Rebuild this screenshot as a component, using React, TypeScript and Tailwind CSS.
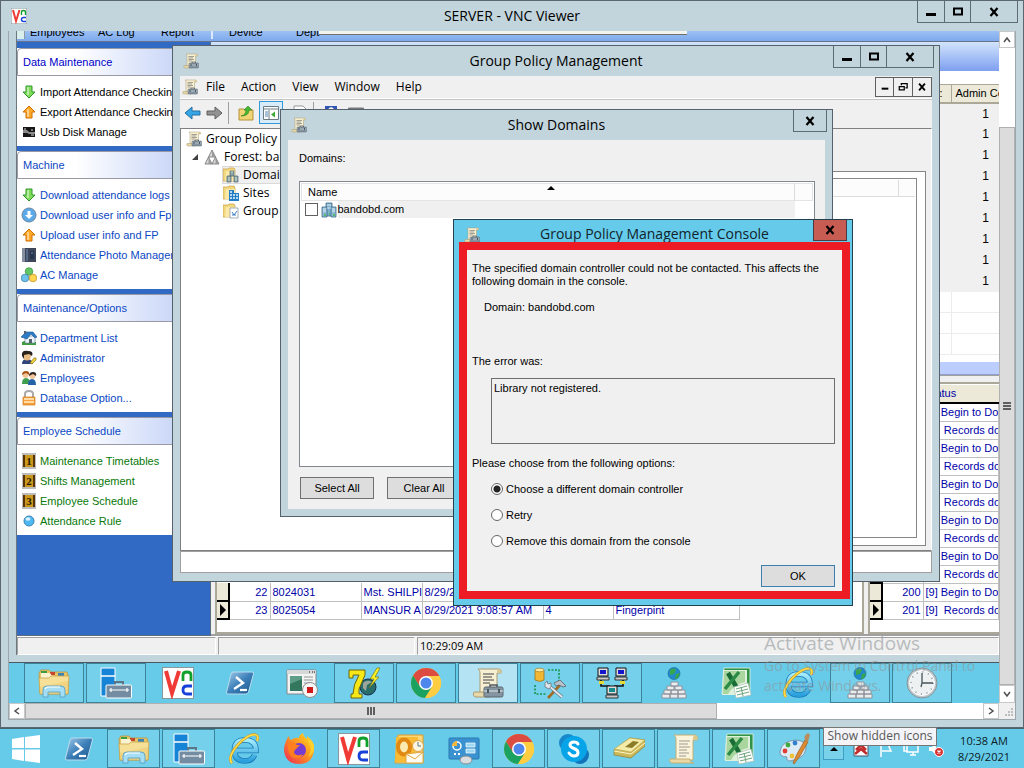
import type { ComponentType, ReactNode } from "react";
import clsx from "clsx";

type IconProps = { className?: string };

const ui = "font-['Open_Sans','Noto_Sans',sans-serif]";
const classic = "font-['Liberation_Sans',Arial,sans-serif]";

/* ---------- icons ---------- */

function GpoIcon({ className }: IconProps) {
  return (
    <svg viewBox="0 0 32 32" className={className} aria-hidden="true">
      <path d="M6 2h20c3 0 4 2 3 4h-4v20H8V6C8 4 7 3 6 2z" fill="#f7efd2" stroke="#a89a72" />
      <path d="M26 2c3 0 4 2 3 4h-4c0-2 0-3 1-4z" fill="#d8c793" />
      <path d="M2 25h16v5H4c-3 0-3-4-2-5z" fill="#e6d8a8" stroke="#a89a72" />
      <path d="M11 7h11M11 10h9M11 13h11M11 16h7" stroke="#7d7d78" strokeWidth="1.4" />
      <path d="M18 20v-2h7v2" fill="none" stroke="#4d5963" strokeWidth="1.6" />
      <rect x="12" y="20" width="19" height="10" rx="1.5" fill="#8494a0" stroke="#5a6771" />
      <path d="M12 24h19" stroke="#d3dce2" strokeWidth="1.2" />
      <path d="M16 22v4M27 22v4" stroke="#36424b" strokeWidth="1.6" />
    </svg>
  );
}

function ScriptIcon({ className }: IconProps) {
  return (
    <svg viewBox="0 0 32 32" className={className} aria-hidden="true">
      <path d="M6 2h20c3 0 4 2 3 5h-4v20H8V6c0-2-1-3-2-4z" fill="#fbf3da" stroke="#c5ae73" />
      <path d="M26 2c3 0 4 2 3 5h-4c0-2 0-4 1-5z" fill="#dcc78a" />
      <path d="M2 26h20c0 3 2 4 4 4H5c-3 0-4-2-3-4z" fill="#ead9a4" stroke="#c5ae73" />
      <path d="M11 8h11M11 11h9M11 14h11M11 17h8M11 20h10M11 23h7" stroke="#9c9c92" strokeWidth="1.2" />
    </svg>
  );
}

function VncIcon({ className }: IconProps) {
  return (
    <svg viewBox="0 0 32 32" className={className} aria-hidden="true">
      <rect x=".5" y=".5" width="31" height="31" fill="#fff" stroke="#8a979c" />
      <path d="M4 4l6 22 7-22" fill="none" stroke="#f03a35" strokeWidth="4" />
      <path d="M21 14V8q0-3 4-3t4 3v6" fill="none" stroke="#12a02c" strokeWidth="2.8" />
      <path d="M30 19h-5q-4 0-4 4t4 4h5" fill="none" stroke="#1741d8" strokeWidth="2.8" />
    </svg>
  );
}

function ExplorerIcon({ className }: IconProps) {
  return (
    <svg viewBox="0 0 32 32" className={className} aria-hidden="true">
      <path d="M1 6l2-3h8l2 2h16l1 3v19H2z" fill="#e6c468" stroke="#b8933a" strokeWidth=".8" />
      <path d="M3 4h6v3H3z" fill="#3c9b45" />
      <path d="M12 5h5v3h-5z" fill="#c8452e" />
      <path d="M20 6h6v3h-6z" fill="#3a83b8" />
      <path d="M3 6h9l2 3h14v5H3z" fill="#fbf2cf" />
      <path d="M1 11h10l2-2h18l-1 18H2z" fill="#f6df96" stroke="#c9a54c" strokeWidth=".8" />
      <path d="M2 20l28-6v12H2z" fill="#ecca6b" opacity=".5" />
      <path d="M5 30v-7q0-4 4-4h14q4 0 4 4v7h-5v-5H10v5z" fill="#a5def4" stroke="#5ea8c8" />
      <path d="M7 22q1-2 3-2h12" fill="none" stroke="#fff" strokeWidth="1.2" />
    </svg>
  );
}

function ServerManagerIcon({ className }: IconProps) {
  return (
    <svg viewBox="0 0 32 32" className={className} aria-hidden="true">
      <path d="M1 1h14v28H1z" fill="#1684d6" stroke="#fff" />
      <path d="M1 9h14" stroke="#fff" strokeWidth="1.5" />
      <path d="M15 18v-3h8v3" fill="none" stroke="#5f7485" strokeWidth="2" />
      <rect x="6" y="18" width="25.5" height="13" rx="1" fill="#738ca1" stroke="#fff" />
      <path d="M9 23h20M11 21v4M27 21v4" stroke="#fff" strokeWidth="1.2" />
    </svg>
  );
}

function PowerShellIcon({ className }: IconProps) {
  return (
    <svg viewBox="0 0 32 32" className={className} aria-hidden="true">
      <defs>
        <linearGradient id="ps" x1="0" y1="0" x2="1" y2="1">
          <stop offset="0" stopColor="#a3cdec" />
          <stop offset=".5" stopColor="#3c7fb8" />
          <stop offset="1" stopColor="#1d568e" />
        </linearGradient>
      </defs>
      <path d="M9 5h19q2 0 1.500 2l-5 18q-.5 2-3 2H4q-2 0-1.500-2L7 7q.5-2 2-2z" fill="url(#ps)" stroke="#b9dcee" />
      <path d="M12 10l7 6-9 6" fill="none" stroke="#fff" strokeWidth="2.4" />
      <path d="M16 23h7" stroke="#fff" strokeWidth="2.2" />
    </svg>
  );
}

function RecorderIcon({ className }: IconProps) {
  return (
    <svg viewBox="0 0 32 32" className={className} aria-hidden="true">
      <path d="M1 3h29v24H1z" fill="#f3f4f2" stroke="#80858a" />
      <path d="M1 3h29v4H1z" fill="#d5d7d8" />
      <path d="M23 5h1M26 5h1M28 5h1" stroke="#555" strokeWidth="1.4" />
      <path d="M4 9h12v15H4z" fill="#5d9d8a" />
      <path d="M4 17l12-5v12H4z" fill="#33785e" />
      <path d="M18 10h9M18 13h9M18 16h5" stroke="#909598" />
      <circle cx="24" cy="23" r="7.5" fill="#f6f6f6" stroke="#8e8e8e" />
      <path d="M21 20h6v6h-6z" fill="#cf1919" />
    </svg>
  );
}

function SevenIcon({ className }: IconProps) {
  return (
    <svg viewBox="0 0 32 32" className={className} aria-hidden="true">
      <circle cx="20" cy="20" r="8" fill="#276d69" stroke="#1c2f52" />
      <path d="M15 16q4-4 9-1l-5 3-1 6-3-3z" fill="#9ba59a" />
      <path d="M1 3h16v5l-6 14v5h3v4H3v-4h2q0-9 6-19H5v3H1z" fill="#f7e716" stroke="#6b6412" />
      <path d="M29 1l-7 11h4l-5 9 10-11h-4l5-9z" fill="#fff223" stroke="#747020" strokeWidth=".7" />
    </svg>
  );
}

function ChromeIcon({ className }: IconProps) {
  return (
    <svg viewBox="0 0 32 32" className={className} aria-hidden="true">
      <circle cx="16" cy="16" r="15" fill="#ffcd41" />
      <path d="M16 9h13.300A15 15 0 0 0 3 8.500L10 20z" fill="#dd4c40" />
      <path d="M3 8.500A15 15 0 0 0 15 31l7-11-6 3-6-3.500z" fill="#1ba261" />
      <path d="M22 20l-7 11A15 15 0 0 0 29.300 9H16z" fill="#ffcd41" />
      <circle cx="16" cy="16" r="7" fill="#fff" />
      <circle cx="16" cy="16" r="5.500" fill="#4f86ec" />
    </svg>
  );
}

function ToolsIcon({ className }: IconProps) {
  return (
    <svg viewBox="0 0 32 32" className={className} aria-hidden="true">
      <path d="M1 3h9v10q-4 3-9 0z" fill="#f2b732" stroke="#9a741c" strokeWidth=".8" />
      <ellipse cx="5.500" cy="3" rx="4.500" ry="1.800" fill="#ffe79c" stroke="#9a741c" strokeWidth=".6" />
      <path d="M14 3h11v11M1 18v9h11" fill="none" stroke="#16964c" strokeWidth="1.600" strokeDasharray="2 1.500" />
      <path d="M14 31l12-13" stroke="#a26c25" strokeWidth="2.600" />
      <path d="M20 16l6-3 6 6-3 1-4-2-3 1z" fill="#b8c2ca" stroke="#56616b" strokeWidth=".8" />
      <path d="M14 18l14 12" stroke="#6c7882" strokeWidth="3.200" />
      <path d="M14 18l14 12" stroke="#e4eaee" strokeWidth="1.800" />
      <path d="M11 20q-1-4 2-6l1 3 3-1q1 4-2 6z" fill="#dfe5e9" stroke="#65717a" strokeWidth=".8" />
    </svg>
  );
}

function MiniPc({ x, y, screen }: { x: number; y: number; screen: string }) {
  return (
    <g transform={`translate(${x} ${y})`}>
      <path d="M0 0h10v8H0z" fill="#dedede" stroke="#111" />
      <path d="M2 2h6v4H2z" fill={screen} />
      <path d="M-1 9h12v3H-1z" fill="#c8c8c8" stroke="#111" strokeWidth=".8" />
    </g>
  );
}

function NetworkIcon({ className }: IconProps) {
  return (
    <svg viewBox="0 0 32 32" className={className} aria-hidden="true">
      <path d="M5 13v6h8v3M27 13v6h-8v3" fill="none" stroke="#111" strokeWidth="1.600" />
      <path d="M3 14h5v3H3zM24 14h5v3h-5z" fill="#e5db37" />
      <MiniPc x={2} y={1} screen="#1515cb" />
      <MiniPc x={20} y={1} screen="#1515cb" />
      <MiniPc x={11} y={19} screen="#168b8b" />
    </svg>
  );
}

function FirewallGlobeIcon({ className }: IconProps) {
  return (
    <svg viewBox="0 0 32 32" className={className} aria-hidden="true">
      <circle cx="16" cy="6.500" r="6" fill="#2289cf" stroke="#156388" strokeWidth=".6" />
      <path d="M12 3q4-3 6 0l-2 4-4 1zM18 7l4-1-2 5-3 1z" fill="#36a74b" />
      <g fill="#e9edf0" stroke="#8d8d94" strokeWidth=".9">
        <path d="M13 15h7v4h-7zM9 19h7v4H9zM17 19h7v4h-7zM6 23h7v4H6zM13 23h7v4h-7zM20 23h7v4h-7zM4 27h8v4H4zM12 27h8v4h-8zM20 27h8v4h-8z" />
      </g>
    </svg>
  );
}

function ExcelIcon({ className }: IconProps) {
  return (
    <svg viewBox="0 0 32 32" className={className} aria-hidden="true">
      <path d="M4 1h26v26H2z" fill="#2f9247" stroke="#e6f3e6" strokeWidth=".8" />
      <path d="M3 3h24v14L17 28H2z" fill="#dff0dd" />
      <path d="M4 4h21v11q-11 2-17 12H3z" fill="#a9d69f" />
      <path d="M8 6l9 15" stroke="#196c35" strokeWidth="4.500" />
      <path d="M19 5L5 22" stroke="#2b8a46" strokeWidth="3.500" />
      <path d="M14 20l14-4 3 12-15 3z" fill="#fff" stroke="#aac0ae" strokeWidth=".7" />
      <path d="M16 22l11-3M16 25l12-3M17 28l12-3M21 20l2 9" stroke="#6ea57b" />
    </svg>
  );
}

function IeIcon({ className }: IconProps) {
  return (
    <svg viewBox="0 0 32 32" className={className} aria-hidden="true">
      <defs>
        <linearGradient id="ie" x1="0" y1="0" x2="0" y2="1">
          <stop offset="0" stopColor="#a6ecfd" />
          <stop offset="1" stopColor="#2ba0dc" />
        </linearGradient>
      </defs>
      <path d="M8 17.500h20q0-10.500-11-10.500T6.500 17.500q0 10.500 10.500 10.500 7 0 9.500-6" fill="none" stroke="#1979b8" strokeWidth="5.600" />
      <path d="M8 17.500h20q0-10.500-11-10.500T6.500 17.500q0 10.500 10.500 10.500 7 0 9.500-6" fill="none" stroke="url(#ie)" strokeWidth="4" />
      <path d="M4 30C-4 22 20-2 28 2q3 1 1 6" fill="none" stroke="#c58e17" strokeWidth="2.600" />
      <path d="M4 30C-4 22 20-2 28 2q3 1 1 6" fill="none" stroke="#ffdc47" strokeWidth="1.800" />
    </svg>
  );
}

function ClockIcon({ className }: IconProps) {
  return (
    <svg viewBox="0 0 32 32" className={className} aria-hidden="true">
      <circle cx="16" cy="16" r="15" fill="#bfc8cc" stroke="#85949b" />
      <circle cx="16" cy="16" r="12.500" fill="#edf1f2" stroke="#fff" />
      <circle cx="16" cy="16" r="11" fill="none" stroke="#7d8c94" strokeWidth="1.500" strokeDasharray="1 4.760" />
      <path d="M16 6v10h11M16 16l-1 4" fill="none" stroke="#46545b" strokeWidth="1.300" />
    </svg>
  );
}

function WindowsIcon({ className }: IconProps) {
  return (
    <svg viewBox="0 0 28 28" className={className} aria-hidden="true">
      <path d="M0 4l12-2v11H0zM13 2l15-2v13H13zM0 14.500h12V26L0 24zM13 14.500h15V28l-15-2z" fill="#fff" />
    </svg>
  );
}

function FirefoxIcon({ className }: IconProps) {
  return (
    <svg viewBox="0 0 32 32" className={className} aria-hidden="true">
      <defs>
        <linearGradient id="ff" x1="1" y1="0" x2="0" y2="1">
          <stop offset="0" stopColor="#ffe226" />
          <stop offset=".45" stopColor="#ff971f" />
          <stop offset="1" stopColor="#ee2455" />
        </linearGradient>
      </defs>
      <path d="M3 8q1-3 3-5 0 3 2 4 4-3 8-2 0-3 4-5 0 4 4 6V3q8 6 7 15-2 13-15 13T1 18Q1 12 3 8z" fill="url(#ff)" />
      <circle cx="16" cy="17" r="7" fill="#763bd0" />
      <path d="M5 10q5-2 9 2h3l-4 4q-2 1-2 4 3 4 9 1-4 7-11 3-5-4-4-14z" fill="#ff7e20" />
      <path d="M20 0q0 4 4 7 7 9 1 17 7-4 6-12-1-4-5-7v3q-5-3-6-8z" fill="#ffcf2b" />
    </svg>
  );
}

function OutlookIcon({ className }: IconProps) {
  return (
    <svg viewBox="0 0 32 32" className={className} aria-hidden="true">
      <path d="M5 2h25v28H2z" fill="#fbd77a" stroke="#e09c22" />
      <path d="M3 4h22v12L14 29H2z" fill="#f9bb35" />
      <ellipse cx="11" cy="14" rx="6" ry="7.500" fill="#fdeab0" stroke="#e18912" strokeWidth="4" />
      <circle cx="25" cy="13" r="5.500" fill="#fff6df" stroke="#dca047" />
      <path d="M25 9v4h3" fill="none" stroke="#5b7689" />
      <path d="M13 21l17-2v11H13z" fill="#fffaf0" stroke="#e0a63f" />
      <path d="M13 21l9 5 8-7" fill="none" stroke="#e0a63f" />
    </svg>
  );
}

function ControlPanelIcon({ className }: IconProps) {
  return (
    <svg viewBox="0 0 32 32" className={className} aria-hidden="true">
      <rect x="1" y="5" width="30" height="21" rx="1" fill="#3a92d1" stroke="#2a78b2" />
      <circle cx="9" cy="13" r="4" fill="none" stroke="#fff" strokeWidth="1.500" />
      <path d="M9 13V8a5 5 0 0 0-5 5z" fill="#f5b73c" />
      <path d="M18 10h9v4h-9zM18 16h9v4h-9z" fill="#9dd7f1" stroke="#fff" strokeWidth=".7" />
      <path d="M6 21h2M10 21h2" stroke="#fff" strokeWidth="2" />
      <ellipse cx="18" cy="27" rx="6" ry="4" fill="#d9dde0" stroke="#838c91" />
    </svg>
  );
}

function SkypeIcon({ className }: IconProps) {
  return (
    <svg viewBox="0 0 32 32" className={className} aria-hidden="true">
      <circle cx="10" cy="10" r="9" fill="#1687ca" />
      <circle cx="22" cy="22" r="9" fill="#1273b9" />
      <circle cx="16" cy="16" r="13" fill="#08a4e8" />
      <path d="M20 11q-1-2-4-2-4 0-4 3 0 2 4 3.500t4 4q0 3.500-4 3.500-3 0-5-3" fill="none" stroke="#fff" strokeWidth="3" strokeLinecap="round" />
    </svg>
  );
}

function ReaderIcon({ className }: IconProps) {
  return (
    <svg viewBox="0 0 32 32" className={className} aria-hidden="true">
      <path d="M1 17L17 5l15 2v6L18 25 1 22z" fill="#cdb858" stroke="#8f7e30" strokeWidth=".7" />
      <path d="M1 16L17 5l15 2-14 12z" fill="#f4eba8" stroke="#b5a34a" strokeWidth=".6" />
      <path d="M12 14l8-6 6 1-7 6z" fill="#8a7b28" />
      <path d="M1 18l17 3 14-11" fill="none" stroke="#fff7c8" />
    </svg>
  );
}

function PaintIcon({ className }: IconProps) {
  return (
    <svg viewBox="0 0 32 32" className={className} aria-hidden="true">
      <path d="M2 18q2-10 16-11 11 1 10 9-2 10-16 12-4 0-3-4-8 0-7-6z" fill="#dcebf5" stroke="#7798ad" />
      <circle cx="7" cy="18" r="2.400" fill="#e13d31" />
      <circle cx="10" cy="12" r="2.400" fill="#41a93f" />
      <circle cx="17" cy="10" r="2.400" fill="#3281d1" />
      <circle cx="14" cy="23" r="2.400" fill="#f0c037" />
      <path d="M27 7l3 2-8 14-6 8-1-1 4-9z" fill="#dc8b33" stroke="#9e5b1d" strokeWidth=".7" />
      <path d="M27 7q-2-4 3-7l2 2q-1 3-2 7z" fill="#bb8c5c" />
    </svg>
  );
}

function ArrowBadge({ className, up }: IconProps & { up?: boolean }) {
  return (
    <svg viewBox="0 0 16 16" className={className} aria-hidden="true">
      {up ? (
        <path d="M8 2l6 6h-3v6H5V8H2z" fill="#ffa726" stroke="#d06e00" strokeLinejoin="round" />
      ) : (
        <path d="M5 2h6v6h3l-6 6-6-6h3z" fill="#7fdc58" stroke="#2d972c" strokeLinejoin="round" />
      )}
      <path d={up ? "M7 5v8" : "M7 3v8"} stroke="#fff" opacity=".6" strokeWidth="1.500" />
    </svg>
  );
}
const DownIcon = (p: IconProps) => <ArrowBadge {...p} />;
const UpIcon = (p: IconProps) => <ArrowBadge {...p} up />;

function UsbIcon({ className }: IconProps) {
  return (
    <svg viewBox="0 0 16 16" className={className} aria-hidden="true">
      <path d="M2 3h12v10H2z" fill="#161616" />
      <path d="M2 6h4l2 2h6v2H8L6 9H2z" fill="#8b8b8b" />
      <path d="M3 5h2M10 6h2M10 11h3" stroke="#ddd" />
    </svg>
  );
}

function RoundDownIcon({ className }: IconProps) {
  return (
    <svg viewBox="0 0 16 16" className={className} aria-hidden="true">
      <circle cx="8" cy="8" r="7" fill="#5aa9e8" stroke="#6d86a0" />
      <path d="M6.500 4h3v4H12l-4 4-4-4h2.500z" fill="#fff" />
    </svg>
  );
}

function BookIcon({ className }: IconProps) {
  return (
    <svg viewBox="0 0 16 16" className={className} aria-hidden="true">
      <path d="M1 1h14v14H1z" fill="#3d4658" />
      <path d="M1 1h3v14H1z" fill="#8790a0" />
      <path d="M9 4h4v8H9z" fill="#27344e" />
      <path d="M6 2v12M10 6h2" stroke="#718bb5" />
    </svg>
  );
}

function ClusterIcon({ className }: IconProps) {
  return (
    <svg viewBox="0 0 16 16" className={className} aria-hidden="true">
      <circle cx="8" cy="4.500" r="3.800" fill="#62c665" stroke="#398f3c" strokeWidth=".7" />
      <circle cx="4" cy="11" r="3.800" fill="#6ec1e8" stroke="#3178a8" strokeWidth=".7" />
      <circle cx="12" cy="11" r="3.800" fill="#ffd44f" stroke="#c18c1b" strokeWidth=".7" />
    </svg>
  );
}

function HouseIcon({ className }: IconProps) {
  return (
    <svg viewBox="0 0 16 16" className={className} aria-hidden="true">
      <path d="M1 12q7-4 14 0v3H1z" fill="#3f9e3c" />
      <path d="M4 6h10v7H4z" fill="#eef4fb" stroke="#657a9b" strokeWidth=".6" />
      <path d="M0 7l5-5h7l4 5-2 1-4-4-4 5z" fill="#2c7bc8" stroke="#22558c" strokeWidth=".6" />
      <path d="M8 9h3v4H8zM3 1h2v3H3z" fill="#55626e" />
    </svg>
  );
}

function AdminIcon({ className }: IconProps) {
  return (
    <svg viewBox="0 0 16 16" className={className} aria-hidden="true">
      <path d="M1 14q0-5 5-5 5 0 6 5z" fill="#31457a" />
      <ellipse cx="6" cy="6" rx="4" ry="4.500" fill="#e7bb83" />
      <path d="M1 6q-1-6 6-5 6 0 4 5L8 4 3 5v4z" fill="#29231f" />
      <path d="M9 13l4-5q3-1 2 2l-4 4z" fill="#efd23b" stroke="#806a0d" strokeWidth=".6" />
    </svg>
  );
}

function PeopleIcon({ className }: IconProps) {
  return (
    <svg viewBox="0 0 16 16" className={className} aria-hidden="true">
      <path d="M1 14q0-6 4-6t4 6z" fill="#3f9d4e" />
      <circle cx="4.500" cy="5" r="3" fill="#f4c59a" />
      <path d="M1 5q0-4 4-4t3 4L5 3z" fill="#a65718" />
      <path d="M7 15q0-6 4-6t4 6z" fill="#2462a8" />
      <circle cx="11.500" cy="6" r="3" fill="#f4c59a" />
      <path d="M8 6q0-4 4-4t3 4l-3-2z" fill="#362820" />
    </svg>
  );
}

function LockIcon({ className }: IconProps) {
  return (
    <svg viewBox="0 0 16 16" className={className} aria-hidden="true">
      <path d="M4 8V4q0-3 4-3t4 3v4" fill="none" stroke="#a9a9a9" strokeWidth="2" />
      <path d="M2 7h12v8H2z" fill="#f8a13a" stroke="#cf7c20" strokeWidth=".7" />
      <path d="M3 9h10M3 12h10" stroke="#fff0d0" strokeWidth="1.300" />
    </svg>
  );
}

function BallIcon({ className }: IconProps) {
  return (
    <svg viewBox="0 0 16 16" className={className} aria-hidden="true">
      <circle cx="8" cy="8" r="5" fill="#4fb7f2" stroke="#3a84b5" />
      <ellipse cx="7" cy="6" rx="2.500" ry="1.800" fill="#d9f2ff" />
    </svg>
  );
}

function NumberBadge({ n, className }: IconProps & { n: number }) {
  return (
    <svg viewBox="0 0 16 16" className={className} aria-hidden="true">
      <path d="M1 0h14v16H1z" fill="#bcbcbc" />
      <path d="M2 2h12v12H2z" fill="#5a3409" />
      <path d="M4 2h8v12H4z" fill="#c9981c" />
      <text x="8" y="12" textAnchor="middle" fontSize="11" fontWeight="700" fill="#2a1803" fontFamily="Liberation Serif">{n}</text>
    </svg>
  );
}
const OneIcon = (p: IconProps) => <NumberBadge {...p} n={1} />;
const TwoIcon = (p: IconProps) => <NumberBadge {...p} n={2} />;
const ThreeIcon = (p: IconProps) => <NumberBadge {...p} n={3} />;

function ForestIcon({ className }: IconProps) {
  return (
    <svg viewBox="0 0 16 16" className={className} aria-hidden="true">
      <path d="M8 1l3.500 7h-7zM4.500 8L8 15H1zM11.500 8L15 15H8z" fill="#dadada" stroke="#6b6b6b" strokeWidth=".8" />
      <path d="M8 1v7h3.500zM4.500 8v7H8zM11.500 8v7H15z" fill="#9a9a9a" />
    </svg>
  );
}

function Folder({ className, children }: IconProps & { children: ReactNode }) {
  return (
    <svg viewBox="0 0 16 16" className={className} aria-hidden="true">
      <path d="M0 2h5l1-1h5l1 2v11H0z" fill="#f3d77f" stroke="#c39f45" strokeWidth=".7" />
      <path d="M3 4h9v10H2z" fill="#fbe9a9" />
      {children}
    </svg>
  );
}
const DomainsIcon = (p: IconProps) => (
  <Folder {...p}>
    <path d="M7 4h4v5H7zM4 9h4v6H4zM11 9h4v6h-4z" fill="#8ca5ac" stroke="#4d666e" strokeWidth=".7" />
    <path d="M8 5h2M5 11h2M12 11h2M5 13h2M12 13h2" stroke="#e5f0d8" strokeWidth=".8" />
  </Folder>
);
const SitesIcon = (p: IconProps) => (
  <Folder {...p}>
    <path d="M6 5h5v3h5v8H6z" fill="#227ec4" />
    <path d="M7 7h2M10 10h2M13 10h2M7 10h2M7 13h2M10 13h2M13 13h2" stroke="#eaf6ff" strokeWidth="1.500" />
  </Folder>
);
const GroupPolicyIcon = (p: IconProps) => (
  <Folder {...p}>
    <path d="M7 5h8v10H7z" fill="#fff" stroke="#8f9aa4" strokeWidth=".8" />
    <path d="M9 9l2 3 3-4M9 12h4" fill="none" stroke="#3c7fc1" />
  </Folder>
);

function DomainIcon({ className }: IconProps) {
  return (
    <svg viewBox="0 0 16 16" className={className} aria-hidden="true">
      <path d="M5 1h6v13H5z" fill="#7fb0cf" stroke="#3c6a88" strokeWidth=".8" />
      <path d="M1 5h5v10H1zM10 5h5v10h-5z" fill="#8db9d4" stroke="#3c6a88" strokeWidth=".8" />
      <path d="M6 3h4M2 7h3M11 7h3M2 9h3M11 9h3M6 6h4" stroke="#e7f4fb" strokeWidth=".9" />
      <path d="M3 13h2M8 12h1M12 13h2" stroke="#44b84a" strokeWidth="1.500" />
    </svg>
  );
}

/* ---------- window chrome ---------- */

type GlyphKind = "min" | "max" | "close" | "restore";

function Glyph({ kind, className = "size-3" }: { kind: GlyphKind; className?: string }) {
  return (
    <svg viewBox="0 0 12 12" className={className} aria-hidden="true" fill="none" stroke="#000">
      {kind === "min" && <path d="M1 8.500h10" strokeWidth="3" />}
      {kind === "max" && <path d="M2 2.500h8v6H2z" strokeWidth="2" />}
      {kind === "close" && <path d="M2.500 2l7 8M9.500 2l-7 8" strokeWidth="2.200" />}
      {kind === "restore" && <path d="M4 4V2h7v5H9M1.500 5.500h6v4h-6z" strokeWidth="1.500" />}
    </svg>
  );
}

function WindowControls() {
  return (
    <div className="mr-[5px] flex h-[22px] justify-self-end divide-x divide-[#5d6b74] self-start border border-t-0 border-[#5d6b74]">
      <button aria-label="Minimize" className="flex w-[27px] items-center justify-center"><Glyph kind="min" /></button>
      <button aria-label="Maximize" className="flex w-[26px] items-center justify-center"><Glyph kind="max" /></button>
      <button aria-label="Close" className="flex w-[46px] items-center justify-center"><Glyph kind="close" /></button>
    </div>
  );
}

function TitleBar({ icon, title, children }: { icon: ReactNode; title: string; children: ReactNode }) {
  return (
    <header className="grid h-[30px] shrink-0 grid-cols-[1fr_auto_1fr] items-center">
      <span className="pl-[10px]">{icon}</span>
      <h2 className={clsx(ui, "text-sm leading-5 text-black")}>{title}</h2>
      {children}
    </header>
  );
}

/* ---------- attendance program ---------- */

type LinkItem = { icon: ComponentType<IconProps>; label: string };

const sections: { title: string; titleClass: string; itemClass: string; items: LinkItem[] }[] = [
  {
    title: "Data Maintenance",
    titleClass: "text-[#0000c8]",
    itemClass: "text-black",
    items: [
      { icon: DownIcon, label: "Import Attendance Checking Data" },
      { icon: UpIcon, label: "Export Attendance Checking Data" },
      { icon: UsbIcon, label: "Usb Disk Manage" },
    ],
  },
  {
    title: "Machine",
    titleClass: "text-[#0a48c4]",
    itemClass: "text-[#0a48c4]",
    items: [
      { icon: DownIcon, label: "Download attendance logs" },
      { icon: RoundDownIcon, label: "Download user info and Fp" },
      { icon: UpIcon, label: "Upload user info and FP" },
      { icon: BookIcon, label: "Attendance Photo Manager" },
      { icon: ClusterIcon, label: "AC Manage" },
    ],
  },
  {
    title: "Maintenance/Options",
    titleClass: "text-[#0a48c4]",
    itemClass: "text-[#0a48c4]",
    items: [
      { icon: HouseIcon, label: "Department List" },
      { icon: AdminIcon, label: "Administrator" },
      { icon: PeopleIcon, label: "Employees" },
      { icon: LockIcon, label: "Database Option..." },
    ],
  },
  {
    title: "Employee Schedule",
    titleClass: "text-[#0a48c4]",
    itemClass: "text-[#087808]",
    items: [
      { icon: OneIcon, label: "Maintenance Timetables" },
      { icon: TwoIcon, label: "Shifts Management" },
      { icon: ThreeIcon, label: "Employee Schedule" },
      { icon: BallIcon, label: "Attendance Rule" },
    ],
  },
];

const logRows = Array.from({ length: 12 }, (_, i) => ({
  id: 190 + i,
  status: i % 2 === 0 ? "[9] Begin to Download" : "[9]  Records download",
}));

const punches = [
  { id: 22, code: "8024031", name: "Mst. SHILPI", time: "8/29/2021 9:08:55 AM", machine: "4", mode: "Fingerpint" },
  { id: 23, code: "8025054", name: "MANSUR A", time: "8/29/2021 9:08:57 AM", machine: "4", mode: "Fingerpint" },
];

function Sidebar() {
  return (
    <nav className="flex w-[194px] shrink-0 flex-col gap-[5px] border-r border-b border-[#5d6b80] bg-[#316ac5] pt-[6px] text-[11px] leading-4">
      {sections.map((s) => (
        <section key={s.title} className="bg-white">
          <h3 className={clsx("flex h-7 items-center rounded-t-sm border border-[#9a9aa5] bg-linear-to-r from-white from-30% to-[#b9c9f4] pl-[5px]", s.titleClass)}>{s.title}</h3>
          <ul className="pt-[6px] pb-1">
            {s.items.map((item) => (
              <li key={item.label} className="h-5">
                <a href="#" className={clsx("flex h-5 items-center gap-[3px] pl-1 whitespace-nowrap", s.itemClass)}>
                  <item.icon className="size-4 shrink-0" />
                  {item.label}
                </a>
              </li>
            ))}
          </ul>
        </section>
      ))}
    </nav>
  );
}

function RowMarker({ active }: { active: boolean }) {
  return (
    <td className="border-r-2 border-b-2 border-black bg-[#ece9d8] p-0">
      {active && (
        <svg viewBox="0 0 8 12" className="ml-[2px] h-3 w-2" aria-hidden="true">
          <path d="M1 0l6 6-6 6z" fill="#000" />
        </svg>
      )}
    </td>
  );
}

const cell = "h-[18px] overflow-hidden border-r border-b border-[#c0c0c0] px-[2px] py-0 whitespace-pre";

function AttendanceApp() {
  return (
    <div className={clsx(classic, "flex min-h-0 flex-1 flex-col border-b border-[#4c5860] bg-[#c3d5dc] pb-[7px] pl-[7px] text-[11px]")}>
      <div className="flex min-h-0 flex-1 flex-col border-l border-[#6b7880] bg-[#f0f0f0]">
        <div className="flex h-[11px] shrink-0 items-end overflow-hidden border-b border-[#66738a] bg-linear-to-b from-[#9cc0f4] to-[#7da9ec] pb-[2px] leading-[14px]">
          <span className="mr-[5px] h-3 w-2 border-r border-[#8d9aa3] bg-[#d9efec]" />
          <button className="w-[68px] text-left">Employees</button>
          <button className="w-[63px] text-left">AC Log</button>
          <button className="w-[50px] text-left">Report</button>
          <span className="h-3 w-[18px] border-l-2 border-[#dce9fb]" />
          <button className="w-[67px] text-left">Device</button>
          <button>Dept</button>
          <span className="mb-[5px] h-2 w-[368px] bg-[#f4f4ee] shadow-[0_1px_0_#70706a]" />
        </div>
        <div className="flex min-h-0 flex-1">
          <Sidebar />
          <div className="flex min-w-0 flex-1 flex-col bg-white">
            <div className="h-[29px] shrink-0 bg-linear-to-b from-[#d3e4fa] to-[#7f9ff0]" />
            <div className="flex h-[291px] shrink-0 flex-col pt-[13px]">
              <table className="w-full table-fixed border-collapse">
                <colgroup><col /><col className="w-[48px]" /></colgroup>
                <thead>
                  <tr className="h-[18px] border-t border-b-2 border-[#aca899] bg-[#ece9d8]">
                    <th className="py-0 pr-2 text-right font-normal">Dept:</th>
                    <th className="overflow-hidden border-l border-[#aca899] py-0 pl-1 text-left font-normal whitespace-nowrap">Admin Count</th>
                  </tr>
                </thead>
                <tbody className="bg-[#f0f0f0] text-right text-[12px]">
                  {Array.from({ length: 9 }, (_, i) => (
                    <tr key={i} className="h-[21px]"><td className="p-0" /><td className="py-0 pr-[10px]">1</td></tr>
                  ))}
                </tbody>
                <tbody>
                  {Array.from({ length: 3 }, (_, i) => (
                    <tr key={i} className="h-[21px] border-b border-[#ececec]"><td className="border-r border-[#ececec] p-0" /><td className="p-0" /></tr>
                  ))}
                </tbody>
              </table>
            </div>
            <div className="h-[13px] shrink-0 border-b border-[#8f9fd0] bg-[#bccdff]" />
            <div className="flex min-h-0 flex-1 gap-1 border-b-2 border-[#a0a0a0] bg-[#f0f0f0] bg-linear-to-b from-[#a0a0a0] from-[1px] to-[#f0f0f0] to-[1px] pt-[7px] pl-1 text-[#0000a8]">
              <div className="flex min-w-0 flex-1 flex-col justify-end border-2 border-[#aca899] bg-white pb-3">
                <table className="w-[522px] table-fixed border-collapse">
                  <colgroup>
                    <col className="w-3" /><col className="w-[41px]" /><col className="w-[91px]" /><col className="w-[61px]" />
                    <col className="w-[121px]" /><col className="w-[70px]" /><col className="w-[126px]" />
                  </colgroup>
                  <tbody>
                    {punches.map((p) => (
                      <tr key={p.id}>
                        <RowMarker active={p.id === 23} />
                        <td className={clsx(cell, "text-right")}>{p.id}</td>
                        <td className={cell}>{p.code}</td>
                        <td className={cell}>{p.name}</td>
                        <td className={cell}>{p.time}</td>
                        <td className={cell}>{p.machine}</td>
                        <td className={cell}>{p.mode}</td>
                      </tr>
                    ))}
                  </tbody>
                </table>
              </div>
              <div className="flex w-[131px] shrink-0 flex-col justify-end overflow-hidden border-y-2 border-l-2 border-[#aca899] bg-white pb-3">
                <table className="w-[129px] table-fixed border-collapse">
                  <colgroup><col className="w-3" /><col className="w-[41px]" /><col /></colgroup>
                  <thead>
                    <tr className="h-[18px] border-b-2 border-black bg-[#ece9d8]">
                      <th className="p-0" /><th className="p-0 text-right font-normal">ID</th>
                      <th className="px-[2px] py-0 text-left font-normal">Status</th>
                    </tr>
                  </thead>
                  <tbody>
                    {logRows.map((r) => (
                      <tr key={r.id}>
                        <RowMarker active={r.id === 201} />
                        <td className={clsx(cell, "text-right")}>{r.id}</td>
                        <td className={cell}>{r.status}</td>
                      </tr>
                    ))}
                  </tbody>
                </table>
              </div>
            </div>
          </div>
        </div>
        <footer className={clsx(ui, "flex h-[19px] shrink-0 gap-[2px] border-t border-white text-[11px] leading-4")}>
          <span className="w-[199px] border border-[#a0a0a0] border-r-white border-b-white" />
          <span className="w-[197px] border border-[#a0a0a0] border-r-white border-b-white" />
          <span className="flex-1 border border-[#a0a0a0] border-r-white border-b-white pl-[2px]">10:29:09 AM</span>
        </footer>
      </div>
    </div>
  );
}

/* ---------- floating windows ---------- */

const btn = "h-[22px] w-[74px] border border-[#707070] bg-[#dddddd] text-center";

function TreeRow({ icon: Icon, label, className }: LinkItem & IconProps) {
  return (
    <li className={clsx("flex h-[18px] items-center gap-1 whitespace-nowrap", className)}>
      <Icon className="size-4 shrink-0" />
      {label}
    </li>
  );
}

function GroupPolicyWindow() {
  return (
    <section aria-label="Group Policy Management" className="absolute top-[14px] left-[163px] flex h-[537px] w-[768px] flex-col border border-[#55626b] bg-[#c3d5dc] pb-2">
      <TitleBar icon={<GpoIcon className="size-4" />} title="Group Policy Management">
        <WindowControls />
      </TitleBar>
      <div className={clsx(ui, "mx-[7px] flex min-h-0 flex-1 flex-col bg-[#f0f0f0] text-[12px]")}>
        <div className="flex h-[23px] shrink-0 items-center border-b border-white pl-[2px]">
          <GpoIcon className="size-4" />
          <div className="flex flex-1 gap-4 pl-2">
            {["File", "Action", "View", "Window", "Help"].map((m) => <button key={m}>{m}</button>)}
          </div>
          <div className="flex h-5 divide-x divide-[#606060] border border-[#606060]">
            <button aria-label="Minimize view" className="flex w-[18px] items-center justify-center"><Glyph kind="min" className="size-2" /></button>
            <button aria-label="Restore view" className="flex w-[19px] items-center justify-center"><Glyph kind="restore" className="size-[10px]" /></button>
            <button aria-label="Close view" className="flex w-[18px] items-center justify-center"><Glyph kind="close" className="size-[10px]" /></button>
          </div>
        </div>
        <div className="flex h-[29px] shrink-0 items-center gap-[5px] border-t border-[#c4c4c4] pb-[3px] pl-1">
          <button aria-label="Back">
            <svg viewBox="0 0 17 16" className="h-4 w-[17px]"><path d="M1 8l7-6v4h8v4H8v4z" fill="#36a5e5" stroke="#246f9f" /></svg>
          </button>
          <button aria-label="Forward">
            <svg viewBox="0 0 17 16" className="h-4 w-[17px]"><path d="M16 8L9 2v4H1v4h8v4z" fill="#929292" stroke="#5f5f5f" /></svg>
          </button>
          <span className="h-[22px] border-l border-[#a0a0a0]" />
          <button aria-label="Up one level" className="px-1">
            <svg viewBox="0 0 16 16" className="size-4">
              <path d="M1 4h5l1 1h8v10H1z" fill="#f1d473" stroke="#b2923a" />
              <path d="M3 11q5-1 5-6H6l4-4 4 4h-3q0 6-8 6z" fill="#45b934" stroke="#2c7f22" strokeWidth=".6" />
            </svg>
          </button>
          <button aria-label="Show tree" className="-ml-1 flex h-[23px] w-6 items-center justify-center border border-[#3399d6] bg-[#d8ebf8]">
            <svg viewBox="0 0 16 14" className="h-[14px] w-4" fill="none">
              <path d="M.5.500h15v13H.500z" fill="#fff" stroke="#6c7a86" />
              <path d="M1 3h14M6 4v9" stroke="#6c7a86" />
              <path d="M2 6h3M2 8h3M2 10h3" stroke="#5484b8" />
              <path d="M12 5.500v6l-4-3z" fill="#3ea836" />
            </svg>
          </button>
          <svg viewBox="0 0 16 16" className="ml-1 size-4" aria-hidden="true"><path d="M2 1h9l3 3v11H2z" fill="#fff" stroke="#999" /><path d="M5 8q1-3 5-3v5" fill="none" stroke="#43a047" strokeWidth="2" /></svg>
          <span className="h-[22px] border-l border-[#a0a0a0]" />
          <svg viewBox="0 0 16 16" className="ml-1 size-4" aria-hidden="true"><path d="M2 1h12v14H2z" fill="#3055b4" /><path d="M6 6q0-3 2-3t2 2-2 3v2" fill="none" stroke="#fff" strokeWidth="1.500" /></svg>
          <svg viewBox="0 0 16 16" className="ml-1 size-4" aria-hidden="true"><path d="M.5 3h15v10H.500z" fill="#fff" stroke="#777" /><path d="M0 4h16" stroke="#777" strokeWidth="2" /></svg>
        </div>
        <div className="flex min-h-0 flex-1 border border-[#808080] border-r-white">
          <ul className="w-[420px] shrink-0 bg-white pt-px">
            <TreeRow icon={GpoIcon} label="Group Policy Management" className="pl-[5px]" />
            <li className="flex items-center pl-[10px]">
              <svg viewBox="0 0 8 8" className="mr-[5px] size-2" aria-hidden="true"><path d="M7 1v6H1z" fill="#404040" /></svg>
              <ul><TreeRow icon={ForestIcon} label="Forest: bandobd.com" /></ul>
            </li>
            <TreeRow icon={DomainsIcon} label="Domains" className="ml-[41px] border border-[#d9d9d9] bg-[#f0f0f0]" />
            <TreeRow icon={SitesIcon} label="Sites" className="pl-[42px]" />
            <TreeRow icon={GroupPolicyIcon} label="Group Policy Modeling" className="pl-[42px]" />
          </ul>
          <div className="flex flex-1 flex-col border-l border-[#808080] pt-[42px] pr-[5px] pb-1">
            <div className="flex-1 border border-[#868686] bg-white px-2 pt-[6px] pb-[7px]">
              <div className="h-full border border-[#868686] p-px">
                <div className="flex h-[17px] border-b border-[#dcdcdc] bg-[#fcfcfc]"><span className="flex-1" /><span className="w-[17px] border-l border-[#dcdcdc]" /></div>
              </div>
            </div>
          </div>
        </div>
        <div className="h-[22px] shrink-0 border border-[#a0a0a0] bg-white" />
      </div>
    </section>
  );
}

function ShowDomainsWindow() {
  return (
    <section aria-label="Show Domains" className="absolute top-[78px] left-[271px] flex h-[408px] w-[553px] flex-col border border-[#55626b] bg-[#c3d5dc] pb-[7px]">
      <TitleBar icon={<GpoIcon className="size-4" />} title="Show Domains">
        <button aria-label="Close" className="mr-[5px] flex h-[22px] w-[34px] items-center justify-center justify-self-end self-start border border-t-0 border-[#5d6b74]"><Glyph kind="close" /></button>
      </TitleBar>
      <div className={clsx(classic, "mx-[7px] flex min-h-0 flex-1 flex-col bg-[#f0f0f0] pr-[10px] pb-[10px] pl-[11px] text-[11px]")}>
        <p className="pt-[11px] leading-[14px]">Domains:</p>
        <div className="mt-4 flex-1 border border-[#828790] bg-white p-px">
          <table className="w-full table-fixed border-collapse">
            <colgroup><col /><col className="w-[18px]" /></colgroup>
            <thead>
              <tr className="h-4 border border-[#e4e4e4] bg-[#fcfcfc]">
                <th className="border-r border-[#dcdcdc] py-0 pl-[6px] text-left font-normal">
                  <span className="grid grid-cols-[1fr_auto_1fr] items-start leading-[16px]">
                    <span>Name</span>
                    <svg viewBox="0 0 8 4" className="mt-[2px] h-1 w-2" aria-hidden="true"><path d="M0 4l4-4 4 4z" /></svg>
                  </span>
                </th>
                <th className="p-0" />
              </tr>
            </thead>
            <tbody>
              <tr>
                <td className="bg-[#f0f0f0] p-0">
                  <label className="flex h-[17px] items-center bg-[#f0f0f0]">
                    <span className="flex h-full items-center gap-[3px] bg-white pr-px pl-[3px]">
                      <input type="checkbox" className="size-[13px] appearance-none border border-[#606060] bg-white" />
                      <DomainIcon className="size-4" />
                    </span>
                    bandobd.com
                  </label>
                </td>
                <td className="p-0" />
              </tr>
            </tbody>
          </table>
        </div>
        <div className="mt-[10px] flex gap-[13px] pl-px">
          <button className={btn}>Select All</button>
          <button className={btn}>Clear All</button>
        </div>
      </div>
    </section>
  );
}

function ConsoleDialog() {
  const options = ["Choose a different domain controller", "Retry", "Remove this domain from the console"];
  return (
    <section role="dialog" aria-label="Group Policy Management Console" className="absolute top-[188px] left-[444px] flex h-[387px] w-[400px] flex-col border border-[#23404d] bg-[#66cbea] pr-[2px] pb-[6px] pl-[5px]">
      <div className="grid h-[22px] grid-cols-[1fr_auto_1fr] items-start overflow-hidden">
        <GpoIcon className="mt-[7px] ml-[5px] size-4" />
        <h2 className={clsx(ui, "pt-1 text-sm leading-5 text-[#12232b]")}>Group Policy Management Console</h2>
        <button aria-label="Close" className="mr-[3px] flex h-[21px] w-[34px] items-center justify-center justify-self-end border border-t-0 border-[#4b3a41] bg-[#c75c52]"><Glyph kind="close" /></button>
      </div>
      <form className={clsx(classic, "flex flex-1 flex-col border-8 border-[#ed1c24] bg-[#f0f0f0] pt-3 pr-[7px] pb-1 pl-[5px] text-[11px] leading-[13px]")}>
        <p>The specified domain controller could not be contacted. This affects the<br />following domain in the console.</p>
        <p className="mt-[13px] pl-3">Domain: bandobd.com</p>
        <label htmlFor="error" className="mt-[41px]">The error was:</label>
        <textarea id="error" readOnly defaultValue="Library not registered." className="mt-[10px] ml-[19px] h-[66px] resize-none border border-[#6e6e6e] px-[2px] py-[3px]" />
        <fieldset className="mt-[13px]">
          <legend className="mb-[6px]">Please choose from the following options:</legend>
          {options.map((o, i) => (
            <label key={o} className="flex h-[26px] items-center gap-[3px] pl-[19px]">
              <input
                type="radio"
                name="action"
                defaultChecked={i === 0}
                className="size-3 appearance-none rounded-full border border-[#666] bg-white checked:bg-[radial-gradient(circle,#222_0_3px,#fff_4px)]"
              />
              {o}
            </label>
          ))}
        </fieldset>
        <button type="button" className="mt-auto h-[22px] w-[74px] self-end border border-[#3c7fb1] bg-[#dddddd]">OK</button>
      </form>
    </section>
  );
}

/* ---------- taskbars ---------- */

type Task = { icon: ComponentType<IconProps>; name: string; state?: "open" | "active" };

const remoteTasks: Task[] = [
  { icon: ExplorerIcon, name: "File Explorer", state: "open" },
  { icon: ServerManagerIcon, name: "Server Manager", state: "open" },
  { icon: VncIcon, name: "VNC Server" },
  { icon: PowerShellIcon, name: "PowerShell" },
  { icon: RecorderIcon, name: "Steps Recorder" },
  { icon: SevenIcon, name: "Attendance", state: "open" },
  { icon: ChromeIcon, name: "Chrome", state: "open" },
  { icon: GpoIcon, name: "Group Policy", state: "active" },
  { icon: ToolsIcon, name: "Database tools", state: "open" },
  { icon: NetworkIcon, name: "Network", state: "open" },
  { icon: FirewallGlobeIcon, name: "Firewall" },
  { icon: ExcelIcon, name: "Excel" },
  { icon: IeIcon, name: "Internet Explorer" },
  { icon: FirewallGlobeIcon, name: "Firewall settings", state: "open" },
  { icon: ClockIcon, name: "Date and Time", state: "open" },
];

const localTasks: Task[] = [
  { icon: PowerShellIcon, name: "PowerShell" },
  { icon: ExplorerIcon, name: "File Explorer", state: "open" },
  { icon: ServerManagerIcon, name: "Server Manager", state: "open" },
  { icon: IeIcon, name: "Internet Explorer" },
  { icon: FirefoxIcon, name: "Firefox" },
  { icon: VncIcon, name: "VNC Viewer", state: "open" },
  { icon: OutlookIcon, name: "Outlook" },
  { icon: ControlPanelIcon, name: "Control Panel" },
  { icon: ChromeIcon, name: "Chrome", state: "open" },
  { icon: SkypeIcon, name: "Skype", state: "open" },
  { icon: ReaderIcon, name: "Card reader", state: "open" },
  { icon: ScriptIcon, name: "Script", state: "open" },
  { icon: ExcelIcon, name: "Excel", state: "open" },
  { icon: PaintIcon, name: "Paint", state: "open" },
];

function TaskButton({ task, className }: { task: Task; className: string }) {
  return (
    <button
      aria-label={task.name}
      className={clsx(
        "flex h-full shrink-0 items-center justify-center border",
        className,
        !task.state && "border-transparent",
        task.state === "open" && "border-[#3c8299] bg-[#75d0eb]",
        task.state === "active" && "border-[#3c8299] bg-[#b4e4f3]",
      )}
    >
      <task.icon className="size-8" />
    </button>
  );
}

const arrow = "flex items-center justify-center border border-[#c8c8c8] bg-white text-[#505050]";

function Chevron({ d }: { d: string }) {
  return <svg viewBox="0 0 8 8" className="size-2" fill="none" stroke="currentColor" strokeWidth="1.500" aria-hidden="true"><path d={d} /></svg>;
}

function LocalTaskbar() {
  return (
    <footer className="flex h-10 shrink-0 border-t border-[#48626d] bg-[#66cbe9]">
      <button aria-label="Start" className="mr-px flex w-[51px] shrink-0 items-center justify-center"><WindowsIcon className="size-7" /></button>
      <div className="flex flex-1 gap-[2px]">
        {localTasks.map((t) => <TaskButton key={t.name} task={t} className="w-[53px]" />)}
      </div>
      <div className="relative flex shrink-0 items-center gap-[9px] pr-[14px] pl-[3px]">
        <button aria-label="Hidden icons" className="flex h-[22px] w-[21px] items-center justify-center border border-[#3f9fc2] bg-[#7ad1ea]">
          <svg viewBox="0 0 8 4" className="h-1 w-2"><path d="M0 4l4-4 4 4z" /></svg>
        </button>
        <svg viewBox="0 0 16 16" className="size-4" aria-hidden="true"><path d="M1 1h14v14H1z" fill="#fff" stroke="#456" /><path d="M2 13l6-5 6 5M3 9l5-5 5 5" fill="none" stroke="#c12c2c" strokeWidth="2.500" /></svg>
        <svg viewBox="0 0 16 16" className="size-4" aria-hidden="true"><path d="M3 1v15M4 2h9l-2 4 2 4H4" fill="none" stroke="#fff" strokeWidth="1.500" /></svg>
        <svg viewBox="0 0 16 16" className="size-4" aria-hidden="true"><path d="M4 3h11v8H4zM7 14h6M10 11v3M1 4v6h3" fill="none" stroke="#fff" strokeWidth="1.500" /></svg>
        <svg viewBox="0 0 16 16" className="size-4" aria-hidden="true"><path d="M1 6h3l4-4v12l-4-4H1z" fill="#fff" /><circle cx="11" cy="11" r="4.500" fill="#d83232" stroke="#fff" /><path d="M9.500 9.500l3 3M12.500 9.500l-3 3" stroke="#fff" strokeWidth="1.200" /></svg>
        <div className={clsx(ui, "w-[62px] text-center text-[11px] leading-4 text-[#0b1c23]")}>
          <time className="block">10:38 AM</time>
          <time className="block">8/29/2021</time>
        </div>
        <div role="tooltip" className={clsx(ui, "absolute -top-[2px] left-[3px] h-[19px] w-[114px] border border-[#767676] bg-[#f4f4f8] text-center text-[12px] leading-4 whitespace-nowrap text-[#575757]")}>
          Show hidden icons
        </div>
      </div>
    </footer>
  );
}

export default function App() {
  return (
    <div className="relative flex h-screen min-h-[600px] flex-col overflow-hidden bg-[#66cbe9]">
      <main className="flex min-h-0 flex-1 flex-col border border-[#5a6670] bg-[#c3d5dc]">
        <TitleBar icon={<VncIcon className="size-4" />} title="SERVER - VNC Viewer">
          <WindowControls />
        </TitleBar>
        <div className="mx-[7px] mb-[7px] grid min-h-0 flex-1 grid-cols-[minmax(0,1fr)_16px] grid-rows-[minmax(0,1fr)_16px] border border-t-0 border-[#9aa7ae]">
          <div className="relative flex min-h-0 flex-col overflow-hidden">
            <AttendanceApp />
            <div className="flex h-10 shrink-0 gap-[2px] bg-[#66cbe9] pl-[15px]">
              {remoteTasks.map((t) => <TaskButton key={t.name} task={t} className="w-[60px]" />)}
            </div>
            <GroupPolicyWindow />
            <ShowDomainsWindow />
            <ConsoleDialog />
          </div>
          <div className="flex flex-col bg-white">
            <button aria-label="Scroll up" className={clsx(arrow, "h-[17px]")}><Chevron d="M1 6l3-4 3 4" /></button>
            <div className="flex flex-1 flex-col">
              <div className="flex-1" />
              <div className="flex flex-[7] flex-col items-center justify-center gap-px border border-[#b0b0b0] bg-[#dcdcdc]">
                <span className="h-[2px] w-2 bg-[#606060]" />
                <span className="h-[2px] w-2 bg-[#606060]" />
                <span className="h-[2px] w-2 bg-[#606060]" />
              </div>
            </div>
            <button aria-label="Scroll down" className={clsx(arrow, "h-[18px]")}><Chevron d="M1 2l3 4 3-4" /></button>
          </div>
          <div className="flex bg-white">
            <button aria-label="Scroll left" className={clsx(arrow, "w-4")}><Chevron d="M6 1L2 4l4 3" /></button>
            <div className="flex flex-1">
              <div className="flex flex-[13] items-center justify-center gap-px border border-[#b0b0b0] bg-[#dcdcdc]">
                <span className="h-2 w-[2px] bg-[#606060]" />
                <span className="h-2 w-[2px] bg-[#606060]" />
                <span className="h-2 w-[2px] bg-[#606060]" />
              </div>
              <div className="flex-[5]" />
            </div>
            <button aria-label="Scroll right" className={clsx(arrow, "w-4")}><Chevron d="M2 1l4 3-4 3" /></button>
          </div>
          <div className="flex items-end justify-end bg-[#f0f0f0] p-[2px]">
            <svg viewBox="0 0 10 10" className="size-[10px]" aria-hidden="true"><path d="M8 1h2v2H8zM8 4h2v2H8zM8 7h2v2H8zM5 4h2v2H5zM5 7h2v2H5zM2 7h2v2H2z" fill="#bdbdbd" /></svg>
          </div>
        </div>
      </main>
      <LocalTaskbar />
      <div className={clsx(ui, "pointer-events-none absolute right-0 bottom-[72px] w-[260px] text-[#8f9698]/60")}>
        <p className="text-[19px] leading-[26px]">Activate Windows</p>
        <p className="text-sm leading-5">Go to System in Control Panel to<br />activate Windows.</p>
      </div>
    </div>
  );
}
